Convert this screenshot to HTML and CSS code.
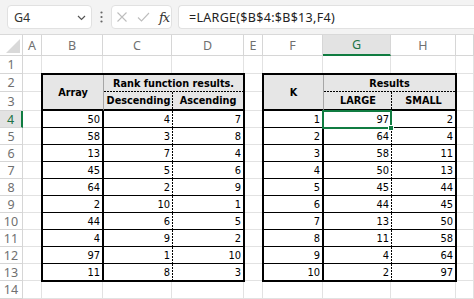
FILE: index.html
```html
<!DOCTYPE html>
<html>
<head>
<meta charset="utf-8">
<link rel="stylesheet" href="styles.css">
</head>
<body>
<div class="fbar">
  <div class="namebox"><span>G4</span>
    <svg class="chev" width="9" height="6" viewBox="0 0 9 6"><polyline points="1,1 4.5,4.5 8,1" fill="none" stroke="#555" stroke-width="1.2"/></svg>
  </div>
  <div class="vdots"><svg width="3" height="12" viewBox="0 0 3 12"><circle cx="1.5" cy="1.5" r="1.1" fill="#666"/><circle cx="1.5" cy="6" r="1.1" fill="#666"/><circle cx="1.5" cy="10.5" r="1.1" fill="#666"/></svg></div>
  <div class="fnbox">
    <svg width="12" height="12" viewBox="0 0 12 12"><path d="M1.5 1.5 L10.5 10.5 M10.5 1.5 L1.5 10.5" stroke="#bdbdbd" stroke-width="1.1" fill="none"/></svg>
    <svg width="13" height="12" viewBox="0 0 13 12"><path d="M1 6.5 L4.5 10 L12 2" stroke="#bdbdbd" stroke-width="1.1" fill="none"/></svg>
    <span class="fx">fx</span>
  </div>
  <div class="formula">=LARGE($B$4:$B$13,F4)</div>
</div>

<div class="sheet">
  <div class="layer grid">
    <div class="corner"><svg width="14" height="14" viewBox="0 0 14 14"><polygon points="14,0 14,14 0,14" fill="#d9d9d9"/></svg></div>
    <div class="ch">A</div><div class="ch">B</div><div class="ch">C</div><div class="ch">D</div><div class="ch">E</div><div class="ch">F</div><div class="ch sel">G</div><div class="ch">H</div><div class="ch"></div>

    <div class="rh">1</div><div class="c"></div><div class="c"></div><div class="c"></div><div class="c"></div><div class="c"></div><div class="c"></div><div class="c"></div><div class="c"></div><div class="c"></div>
    <div class="rh">2</div><div class="c"></div><div class="c"></div><div class="c"></div><div class="c"></div><div class="c"></div><div class="c"></div><div class="c"></div><div class="c"></div><div class="c"></div>
    <div class="rh">3</div><div class="c"></div><div class="c"></div><div class="c"></div><div class="c"></div><div class="c"></div><div class="c"></div><div class="c"></div><div class="c"></div><div class="c"></div>
    <div class="rh sel">4</div><div class="c"></div><div class="c"></div><div class="c"></div><div class="c"></div><div class="c"></div><div class="c"></div><div class="c"></div><div class="c"></div><div class="c"></div>
    <div class="rh">5</div><div class="c"></div><div class="c"></div><div class="c"></div><div class="c"></div><div class="c"></div><div class="c"></div><div class="c"></div><div class="c"></div><div class="c"></div>
    <div class="rh">6</div><div class="c"></div><div class="c"></div><div class="c"></div><div class="c"></div><div class="c"></div><div class="c"></div><div class="c"></div><div class="c"></div><div class="c"></div>
    <div class="rh">7</div><div class="c"></div><div class="c"></div><div class="c"></div><div class="c"></div><div class="c"></div><div class="c"></div><div class="c"></div><div class="c"></div><div class="c"></div>
    <div class="rh">8</div><div class="c"></div><div class="c"></div><div class="c"></div><div class="c"></div><div class="c"></div><div class="c"></div><div class="c"></div><div class="c"></div><div class="c"></div>
    <div class="rh">9</div><div class="c"></div><div class="c"></div><div class="c"></div><div class="c"></div><div class="c"></div><div class="c"></div><div class="c"></div><div class="c"></div><div class="c"></div>
    <div class="rh">10</div><div class="c"></div><div class="c"></div><div class="c"></div><div class="c"></div><div class="c"></div><div class="c"></div><div class="c"></div><div class="c"></div><div class="c"></div>
    <div class="rh">11</div><div class="c"></div><div class="c"></div><div class="c"></div><div class="c"></div><div class="c"></div><div class="c"></div><div class="c"></div><div class="c"></div><div class="c"></div>
    <div class="rh">12</div><div class="c"></div><div class="c"></div><div class="c"></div><div class="c"></div><div class="c"></div><div class="c"></div><div class="c"></div><div class="c"></div><div class="c"></div>
    <div class="rh">13</div><div class="c"></div><div class="c"></div><div class="c"></div><div class="c"></div><div class="c"></div><div class="c"></div><div class="c"></div><div class="c"></div><div class="c"></div>
    <div class="rh">14</div><div class="c"></div><div class="c"></div><div class="c"></div><div class="c"></div><div class="c"></div><div class="c"></div><div class="c"></div><div class="c"></div><div class="c"></div>
  </div>

  <div class="layer content">
    <div class="tbl t1">
      <div class="th h-main">Array</div>
      <div class="th h-group">Rank function results.</div>
      <div class="th h-sub1">Descending</div>
      <div class="th h-sub2">Ascending</div>
      <div class="d">50</div><div class="d">4</div><div class="d">7</div>
      <div class="d">58</div><div class="d">3</div><div class="d">8</div>
      <div class="d">13</div><div class="d">7</div><div class="d">4</div>
      <div class="d">45</div><div class="d">5</div><div class="d">6</div>
      <div class="d">64</div><div class="d">2</div><div class="d">9</div>
      <div class="d">2</div><div class="d">10</div><div class="d">1</div>
      <div class="d">44</div><div class="d">6</div><div class="d">5</div>
      <div class="d">4</div><div class="d">9</div><div class="d">2</div>
      <div class="d">97</div><div class="d">1</div><div class="d">10</div>
      <div class="d">11</div><div class="d">8</div><div class="d">3</div>
    </div>

    <div class="tbl t2">
      <div class="th h-main">K</div>
      <div class="th h-group">Results</div>
      <div class="th h-sub1">LARGE</div>
      <div class="th h-sub2">SMALL</div>
      <div class="d">1</div><div class="d">97</div><div class="d">2</div>
      <div class="d">2</div><div class="d">64</div><div class="d">4</div>
      <div class="d">3</div><div class="d">58</div><div class="d">11</div>
      <div class="d">4</div><div class="d">50</div><div class="d">13</div>
      <div class="d">5</div><div class="d">45</div><div class="d">44</div>
      <div class="d">6</div><div class="d">44</div><div class="d">45</div>
      <div class="d">7</div><div class="d">13</div><div class="d">50</div>
      <div class="d">8</div><div class="d">11</div><div class="d">58</div>
      <div class="d">9</div><div class="d">4</div><div class="d">64</div>
      <div class="d">10</div><div class="d">2</div><div class="d">97</div>
    </div>

    <div class="selection"><div class="handle"></div></div>
  </div>
</div>
</body>
</html>
```

FILE: styles.css
```css
* { box-sizing: border-box; }
html, body { margin: 0; padding: 0; }
body {
  width: 474px;
  height: 299px;
  overflow: hidden;
  background: #fff;
  font-family: "Noto Sans", "Open Sans", sans-serif;
}

/* formula bar */
.fbar {
  height: 35px;
  background: #f3f3f3;
  border-bottom: 1px solid #d9d9d9;
  display: flex;
  align-items: flex-start;
  padding: 5px 0 0 7px;
}
.namebox {
  width: 85px;
  height: 24px;
  background: #fff;
  border: 1px solid #e1e1e1;
  border-radius: 4px;
  display: flex;
  align-items: center;
  justify-content: space-between;
  padding: 0 5px 0 6px;
  font-size: 12.5px;
  color: #333;
}
.chev { margin-top: 1px; }
.vdots {
  width: 19px;
  height: 24px;
  display: flex;
  align-items: center;
  justify-content: center;
}
.fnbox {
  width: 61px;
  height: 24px;
  background: #fff;
  border: 1px solid #e1e1e1;
  border-radius: 4px;
  display: flex;
  align-items: center;
  gap: 9px;
  padding: 0 0 0 4px;
}
.fx {
  font-family: "DejaVu Serif", "Liberation Serif", serif;
  font-style: italic;
  font-size: 13px;
  color: #333;
  letter-spacing: -1px;
}
.formula {
  margin-left: 6px;
  flex: 1;
  height: 24px;
  background: #fff;
  border: 1px solid #e1e1e1;
  border-right: none;
  border-radius: 4px 0 0 4px;
  padding-left: 10px;
  display: flex;
  align-items: center;
  font-size: 12.5px;
  letter-spacing: 0.3px;
  color: #222;
}

/* sheet */
.sheet {
  display: grid;
  grid-template-columns: 1fr;
  grid-template-rows: 264px;
}
.layer {
  grid-area: 1 / 1;
  display: grid;
  grid-template-columns: 23px 19px 61px 69px 72px 19px 60px 68px 65px 1fr;
  grid-template-rows: 21px 18px 18px 19px repeat(10, 17px) 18px;
}
.corner {
  border-right: 1px solid #d6d6d6;
  border-bottom: 1px solid #d6d6d6;
  display: flex;
  align-items: flex-end;
  justify-content: flex-end;
  padding: 0 2px 2px 0;
}
.ch, .rh {
  color: #707070;
  font-size: 12.5px;
  display: flex;
  align-items: center;
  justify-content: center;
  border-right: 1px solid #d6d6d6;
  border-bottom: 1px solid #d6d6d6;
  background: #fff;
}
.ch.sel {
  background: #e3e3e3;
  border-bottom: 2px solid #107c41;
  color: #217346;
}
.rh.sel {
  background: #e3e3e3;
  border-right: 2px solid #107c41;
  color: #217346;
}
.c {
  border-right: 1px solid #e2e2e2;
  border-bottom: 1px solid #e2e2e2;
}

/* tables */
.tbl {
  grid-row: 3 / 15;
  margin: -1px;
  border: 2px solid #000;
  background: #fff;
  display: grid;
  grid-template-rows: 17px 19px repeat(9, 17px) 16px;
  font-family: "DejaVu Sans Condensed", "DejaVu Sans", sans-serif;
  font-stretch: semi-condensed;
  font-size: 11px;
  color: #000;
}
.t1 { grid-column: 3 / 6; grid-template-columns: 61px 69px 70px; }
.t2 { grid-column: 7 / 10; grid-template-columns: 60px 68px 63px; }

.th {
  background: #e6e6e6;
  font-weight: bold;
  font-size: 10.8px;
  display: flex;
  align-items: center;
  justify-content: center;
}
.h-main {
  grid-row: 1 / 3;
  grid-column: 1;
  border-right: 1px solid #a6a6a6;
  border-bottom: 2px solid #000;
}
.h-group {
  grid-row: 1;
  grid-column: 2 / 4;
  background:
    repeating-linear-gradient(to right, #000 0 2px, transparent 2px 3px) left bottom / 100% 1px no-repeat,
    #e6e6e6;
}
.h-sub1 {
  grid-row: 2;
  grid-column: 2;
  border-bottom: 2px solid #000;
  background:
    repeating-linear-gradient(to bottom, #000 0 2px, transparent 2px 3px) right top / 1px 100% no-repeat,
    #e6e6e6;
}
.h-sub2 {
  grid-row: 2;
  grid-column: 3;
  border-bottom: 2px solid #000;
}

.d {
  display: flex;
  align-items: center;
  justify-content: flex-end;
  padding-right: 2px;
  border-bottom: 1px solid #000;
}
.d:nth-child(3n+5) { border-right: 2px solid #000; }
.d:nth-child(3n+6) {
  padding-right: 3px;
  background: repeating-linear-gradient(to bottom, #000 0 2px, transparent 2px 3px) right top / 1px 100% no-repeat;
}
.d:nth-last-child(-n+3) { border-bottom: none; }

/* active cell */
.selection {
  grid-row: 5;
  grid-column: 8;
  margin: -1px;
  border: 2px solid #107c41;
  position: relative;
}
.handle {
  position: absolute;
  right: -4px;
  bottom: -4px;
  width: 6px;
  height: 6px;
  background: #107c41;
  border: 1px solid #fff;
}
```
